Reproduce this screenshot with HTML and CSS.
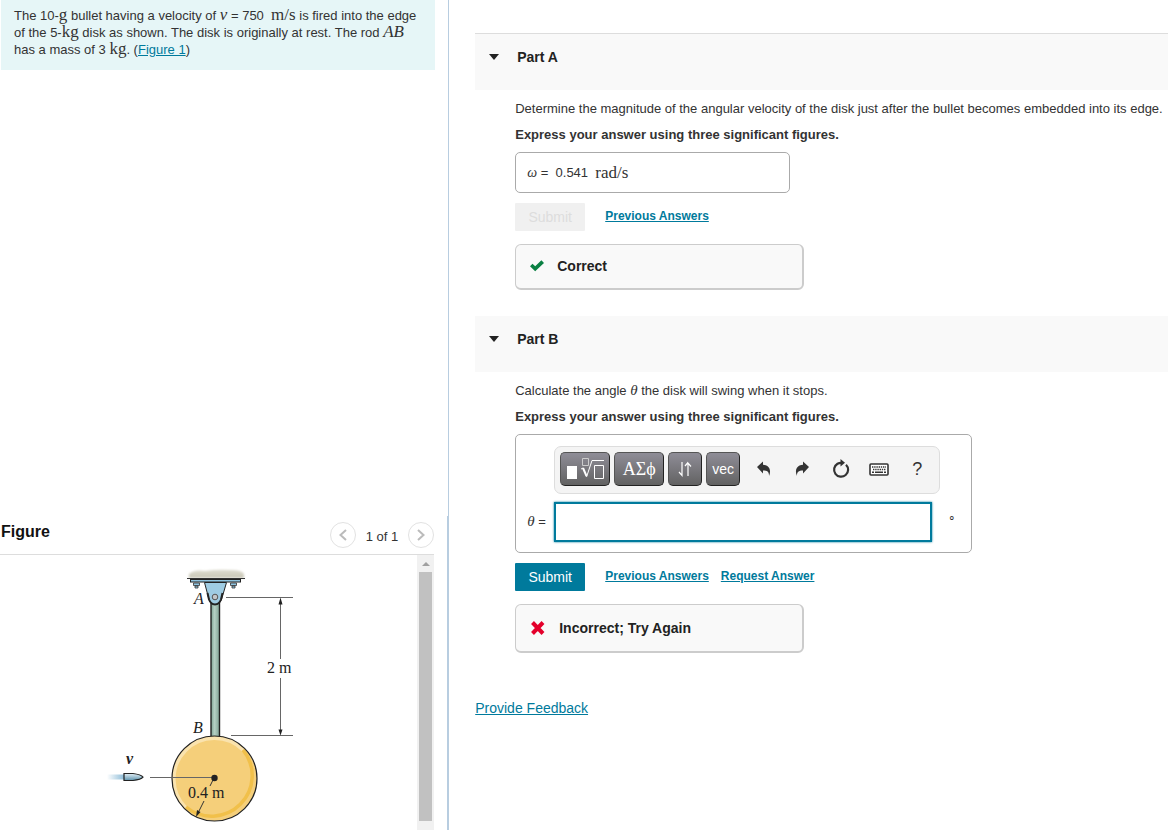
FILE: index.html
```html
<!DOCTYPE html>
<html lang="en">
<head>
<meta charset="utf-8">
<meta name="viewport" content="width=device-width, initial-scale=1">
<title>Angular velocity of a disk</title>
<link rel="stylesheet" href="styles.css">
</head>
<body>
<div class="layout">
  <aside class="side">
    <section class="problem-pane">
      <p class="problem">The 10-<span class="math">g</span> bullet having a velocity of <i class="math">v</i> = 750 &nbsp;<span class="math">m/s</span> is fired into the edge of the 5-<span class="math">kg</span> disk as shown. The disk is originally at rest. The rod <i class="math">AB</i> has a mass of 3 <span class="math">kg</span>. (<a href="#figure">Figure 1</a>)</p>
    </section>
    <section class="figure-pane" id="figure">
      <header class="figure-head">
        <h2>Figure</h2>
        <nav class="pager" aria-label="Figures">
          <button type="button" class="round" aria-label="Previous figure"><svg width="10" height="12" viewBox="0 0 10 12"><path d="M8 1 2.500 6 8 11"/></svg></button>
          <span>1 of 1</span>
          <button type="button" class="round" aria-label="Next figure"><svg width="10" height="12" viewBox="0 0 10 12"><path d="M2 1 7.500 6 2 11"/></svg></button>
        </nav>
      </header>
      <div class="figure-view">
        <svg class="drawing" width="417" height="275" viewBox="0 555 417 275" role="img" aria-label="Rod AB with disk struck by a bullet">
          <defs>
            <linearGradient id="rod"><stop offset="0" stop-color="#7ea294"/><stop offset=".4" stop-color="#b5d0c4"/><stop offset="1" stop-color="#799c8f"/></linearGradient>
            <linearGradient id="trail"><stop offset="0" stop-color="#fff"/><stop offset="1" stop-color="#8fbdd8"/></linearGradient>
            <linearGradient id="shell" x2="0" y2="1"><stop offset="0" stop-color="#e4f1f7"/><stop offset="1" stop-color="#5d93ad"/></linearGradient>
            <linearGradient id="wall" x2="0" y2="1"><stop offset="0" stop-color="#dfddd1"/><stop offset="1" stop-color="#c8c6b6"/></linearGradient>
            <filter id="soft" x="-10%" y="-20%" width="120%" height="140%"><feGaussianBlur stdDeviation="1"/></filter>
          </defs>
          <path d="M189 578v-4q5-5 16-3 12-2 26-1 11 0 13 4v4z" fill="url(#wall)" filter="url(#soft)"/>
          <path d="M187 578.500h58" stroke="#333" fill="none"/>
          <rect x="190.500" y="579.500" width="50" height="2.500" fill="#8fc4e0" stroke="#222"/>
          <path d="M193.500 583h6v2.500h-6zM195 586h3v2h-3zM230.500 583h6v2.500h-6zM232 586h3v2h-3z" fill="#8fc4e0" stroke="#333" stroke-width=".8"/>
          <rect x="211" y="600" width="9" height="136" fill="url(#rod)"/>
          <path d="M211 600v136M219.500 600v136" stroke="#222" stroke-width="1.400"/>
          <path d="M204.500 582.500h22l-5 17q-2 5-6.500 5t-6-5z" fill="#9fcce3" stroke="#222"/>
          <path d="M207.500 593l1.500 6.500q2 5 6 5t6-5l1.500-6.500" fill="none" stroke="#222" stroke-width="2"/>
          <circle cx="215" cy="597" r="2.800" fill="#c3c7c9" stroke="#555"/>
          <circle cx="214.500" cy="778.500" r="42.500" fill="#f5cf7a"/>
          <path d="M186 808A40.500 40.500 0 0 1 243 750" fill="none" stroke="#fae3ae" stroke-width="3.500"/>
          <path d="M243 750A40.500 40.500 0 0 1 186 807" fill="none" stroke="#f1c04a" stroke-width="3.500"/>
          <circle cx="214.500" cy="778.500" r="42.500" fill="none" stroke="#222" stroke-width="1.200"/>
          <path d="M226 597.500h67M231 735.500h62M280.500 601v58M280.500 678v54M150 777.500h64" fill="none" stroke="#666"/>
          <path d="M280.500 597.500l2 7h-4zM280.500 735.500l2-6h-4z" fill="#222"/>
          <path d="M214 778l-4 8M204 801l-5 10" fill="none" stroke="#333"/>
          <path d="M196 817l1-7 3.500 2z" fill="#222"/>
          <circle cx="214.500" cy="778" r="3.200" fill="#222"/>
          <path d="M107 774.500h17v5h-17z" fill="url(#trail)"/>
          <path d="M124 773.500h9q8 1 10 3.700-2 2.500-10 3.300h-9z" fill="url(#shell)" stroke="#222" stroke-width="1.200"/>
          <g class="labels">
            <text x="194" y="604" class="it">A</text>
            <text x="193" y="733" class="it">B</text>
            <text x="267" y="673">2 m</text>
            <text x="188" y="798">0.4 m</text>
            <text x="126" y="764" class="it bold">v</text>
          </g>
        </svg>
        <div class="scrollbar" aria-hidden="true"><span class="up"></span><span class="thumb"></span></div>
      </div>
    </section>
  </aside>

  <main class="parts">
    <section class="part">
      <header class="part-head first"><span class="caret"></span><h2>Part A</h2></header>
      <div class="part-body">
        <p>Determine the magnitude of the angular velocity of the disk just after the bullet becomes embedded into its edge.</p>
        <p class="strong">Express your answer using three significant figures.</p>
        <div class="answer"><i class="sym">ω</i> = &nbsp;0.541 &nbsp;<span class="math">rad/s</span></div>
        <div class="actions">
          <button type="button" class="submit" disabled>Submit</button>
          <a href="#a">Previous Answers</a>
        </div>
        <div class="result"><svg width="14" height="12" viewBox="0 0 14 12"><path d="M0 6.300 2.500 3.800l2.700 2.500L11.400.3l2.600 2.600-8.800 8.400z" fill="#0a8043"/></svg>Correct</div>
      </div>
    </section>

    <section class="part">
      <header class="part-head"><span class="caret"></span><h2>Part B</h2></header>
      <div class="part-body">
        <p>Calculate the angle <i class="theta">θ</i> the disk will swing when it stops.</p>
        <p class="strong">Express your answer using three significant figures.</p>
        <div class="editor">
          <div class="toolbar">
            <button type="button" class="key wide" aria-label="Templates"><svg width="38" height="24" viewBox="0 0 38 24"><path d="M1 9h10v13H1z" fill="#fff"/><g fill="none" stroke="#fff"><path d="M16.500 1.500h6v7h-6z" stroke="#ccc"/><path d="M28.500 8.500h9v13h-9z"/><path d="M15 12l2-1"/><path d="M17 11l3.500 8" stroke-width="2"/><path d="M20.500 20l5.500-16.500h12"/></g></svg></button>
            <button type="button" class="key wide greek">ΑΣϕ</button>
            <button type="button" class="key" aria-label="Subscript and superscript"><svg width="14" height="18" viewBox="0 0 14 18" fill="none" stroke="#fff" stroke-width="1.200"><path d="M4 2v13M1 12l3 3.500H4V2M10 16V3l3 3.500M7 6l3-3.500"/></svg></button>
            <button type="button" class="key vec">vec</button>
            <div class="tools">
              <button type="button" class="tool" aria-label="Undo"><svg width="16" height="16" viewBox="0 0 16 16"><path d="M1 6 7 .5v3.300c5 .2 9 4 6 11.200.2-4-1.500-5.500-6-5.500v3z"/></svg></button>
              <button type="button" class="tool" aria-label="Redo"><svg width="16" height="16" viewBox="0 0 16 16"><path d="M15 6 9 .5v3.300c-5 .2-9 4-6 11.200-.2-4 1.500-5.500 6-5.500v3z"/></svg></button>
              <button type="button" class="tool" aria-label="Reset"><svg width="18" height="20" viewBox="0 0 18 20"><path d="M14 5.700a7 7 0 1 1-8.500-1q1.500-.9 4-.9" fill="none" stroke="#333" stroke-width="2.200"/><path d="M8.500 0v7.500L13 3.800z"/></svg></button>
              <button type="button" class="tool" aria-label="Keyboard"><svg width="20" height="14" viewBox="0 0 20 14"><rect x="1" y="2" width="18" height="11" rx="1" fill="#fff" stroke="#333" stroke-width="1.600"/><path d="M3 5h14M4 7.500h13" fill="none" stroke="#333" stroke-width="1.500" stroke-dasharray="1.400 .8"/><path d="M3 10.300h2M6 10.300h8M15 10.300h2" fill="none" stroke="#333" stroke-width="1.400"/></svg></button>
              <button type="button" class="tool help">?</button>
            </div>
          </div>
          <label for="theta"><i class="theta">θ</i> =</label>
          <input type="text" id="theta">
          <span class="unit">∘</span>
        </div>
        <div class="actions">
          <button type="button" class="submit">Submit</button>
          <a href="#b">Previous Answers</a>
          <a href="#r">Request Answer</a>
        </div>
        <div class="result tall"><svg width="16" height="14" viewBox="0 0 16 14"><path d="M2.500 1.500l10.500 11M13 1.500l-10.500 11" stroke="#e4002b" stroke-width="4" fill="none"/></svg>Incorrect; Try Again</div>
      </div>
    </section>
    <a class="feedback" href="#feedback">Provide Feedback</a>
  </main>
</div>
</body>
</html>
```

FILE: styles.css
```css
* { box-sizing: border-box; }
body {
  margin: 0;
  background: #fff;
  color: #333;
  font: 13px/16px "Liberation Sans", Arial, sans-serif;
}
h2, p { margin: 0; }
button { font: inherit; padding: 0; border: 0; cursor: pointer; }
svg { display: block; flex: none; }
a { color: #007a9c; }
.math { font-family: "Liberation Serif", "Times New Roman", serif; font-size: 17px; line-height: 0; }

.layout { display: grid; grid-template-columns: 5fr 8fr; min-height: 100vh; }

.side { display: flex; flex-direction: column; min-width: 0; }
.problem-pane { flex: 1; padding: 0 13px 0 1px; border-right: 1px solid #b8cde0; }
.problem { padding: 7px 12px 12px 13px; background: #e6f6f7; line-height: 17px; }

.figure-pane { padding-right: 13px; border-right: 2px solid #b8cde0; }
.figure-head {
  display: flex;
  align-items: center;
  justify-content: space-between;
  height: 39px;
  padding-left: 1px;
  border-bottom: 1px solid #ddd;
}
.figure-head h2 { color: #111; font-size: 16px; line-height: 20px; padding-bottom: 6px; }
.pager { display: flex; align-items: center; gap: 10px; font-size: 13px; }
.pager span { padding-top: 3px; }
.round {
  display: grid;
  place-items: center;
  width: 26px;
  height: 26px;
  border: 1px solid #e2e2e2;
  border-radius: 50%;
  background: #fff;
}
.round path { fill: none; stroke: #bbb; stroke-width: 2; }
.figure-view { display: flex; justify-content: space-between; }
.drawing { flex: 0 1 auto; min-width: 0; }
.labels { fill: #222; font: 16px "Liberation Serif", "Times New Roman", serif; }
.it { font-style: italic; }
.bold { font-weight: bold; }
.scrollbar {
  display: flex;
  flex: none;
  flex-direction: column;
  align-items: center;
  width: 17px;
  padding: 7px 0 9px;
  background: #f1f1f1;
}
.up { border: 4px solid transparent; border-top: 0; border-bottom-color: #a0a0a0; margin-bottom: 6px; }
.thumb { flex: 1; width: 13px; background: #c1c1c1; }

.parts { min-width: 0; padding: 33px 0 24px 26px; }
.part { margin-bottom: 26px; }
.part-head {
  display: flex;
  align-items: center;
  gap: 18px;
  height: 56px;
  padding: 0 14px 10px;
  background: #f9f9f9;
}
.part-head.first { height: 57px; border-top: 1px solid #ddd; }
.part-head h2 { color: #222; font-size: 14px; }
.caret { border: 5px solid transparent; border-top: 6px solid #222; border-bottom: 0; }
.part-body { padding: 11px 0 0 40px; }
.part-body p { margin-bottom: 10px; }
.part-body .strong { margin-bottom: 9px; font-weight: bold; }
.answer {
  display: flex;
  align-items: center;
  width: 275px;
  height: 41px;
  padding: 0 11px;
  border: 1px solid #aaa;
  border-radius: 5px;
  white-space: pre;
}
.sym { font-size: 14px; font-family: "Liberation Serif", serif; }
.actions { display: flex; align-items: center; gap: 12px; margin: 10px 0 13px; }
.actions a { padding-bottom: 2px; font-size: 12px; font-weight: bold; }
.submit {
  width: 70px;
  height: 28px;
  margin-right: 8px;
  border-radius: 1px;
  background: #007a9c;
  color: #fff;
  font-size: 14px;
}
.submit:disabled { background: #f0f0f0; color: #ddd; }
.result {
  display: flex;
  align-items: center;
  gap: 13px;
  width: 289px;
  height: 46px;
  padding: 0 14px 2px;
  border: 1px solid #ccc;
  border-right-width: 2px;
  border-bottom-width: 2px;
  border-radius: 6px;
  background: #f9f9f9;
  color: #222;
  font-size: 14px;
  font-weight: bold;
}
.result.tall { height: 49px; padding-bottom: 0; }

.editor {
  display: grid;
  grid-template-columns: 27px 378px auto;
  align-items: center;
  gap: 8px 0;
  width: 457px;
  max-width: 100%;
  padding: 11px;
  padding-bottom: 10px;
  border: 1px solid #aaa;
  border-radius: 5px;
}
.toolbar {
  display: flex;
  grid-column: 2 / 4;
  align-items: center;
  gap: 4px;
  width: 386px;
  height: 48px;
  padding: 0 5px 2px;
  border: 1px solid #ddd;
  border-radius: 7px;
  background: #f4f4f4;
}
.key {
  display: grid;
  place-items: center;
  width: 34px;
  height: 34px;
  border: 1px solid #555;
  border-right-color: #222;
  border-bottom-color: #222;
  border-radius: 5px;
  background: linear-gradient(#8f8d97, #626262);
  color: #fff;
}
.key.wide { width: 50px; }
.greek { font: 18px "Liberation Serif", serif; }
.vec { font-size: 14px; }
.tools { display: flex; flex: 1; justify-content: space-between; padding-left: 3px; }
.tool { display: grid; place-items: center; width: 34px; height: 34px; background: none; fill: #333; }
.tool.help { color: #333; font-size: 18px; }
.theta { font: italic 15px "Liberation Serif", serif; line-height: 0; }
.editor input {
  width: 378px;
  height: 40px;
  padding: 0 8px;
  border: 2px solid #007a9c;
  outline: 0;
  box-shadow: 0 0 2px #007a9c;
  font: inherit;
}
.unit { padding: 0 0 9px 16px; font-size: 12px; }
.feedback { display: inline-block; margin-top: 21px; font-size: 14px; }
```
